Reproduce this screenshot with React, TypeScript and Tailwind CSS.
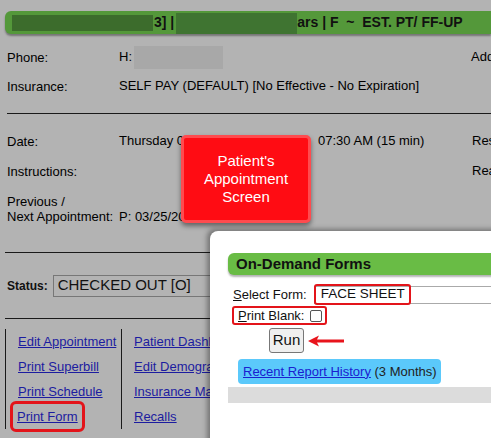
import React from "react";

const font = { fontFamily: '"Liberation Sans", Arial, sans-serif' };

function Row({ label, children, h, extra }: { label: React.ReactNode; children?: React.ReactNode; h: string; extra?: React.ReactNode }) {
  return (
    <div className={`flex items-center ${h} pl-[7px] text-[13px] text-[#000]`}>
      <div className="w-[112px] shrink-0 leading-[15px]">{label}</div>
      <div className="flex-1 whitespace-nowrap">{children}</div>
      {extra}
    </div>
  );
}

export default function App() {
  return (
    <div className="relative h-[438px] w-[491px] overflow-hidden bg-[#b3b3b3]" style={font}>
      {/* Header bar */}
      <div className="ml-[5px] mt-[11px] flex h-[23px] items-center whitespace-nowrap rounded-l-[6px] bg-[#54983a] text-[14px] font-bold text-[#111] shadow-[0_2px_2px_rgba(0,0,0,0.35)]">
        <div className="ml-[7px] h-[16px] w-[141px] bg-[#3c6c2c]" />
        <span className="ml-[1px]">3] |</span>
        <div className="ml-[2px] h-[21px] w-[121px] self-end bg-[#3f7431]" />
        <span>ars | F&nbsp; ~&nbsp; EST. PT/ FF-UP</span>
      </div>

      <div className="mt-[9px]">
        <Row h="h-[28px]" label="Phone:" extra={<span className="absolute left-[471px]">Add</span>}>
          <div className="flex items-center">
            <span>H:</span>
            <div className="ml-[2px] h-[23px] w-[89px] bg-[#a8a8a8]" />
          </div>
        </Row>
        <Row h="h-[30px]" label="Insurance:">
          SELF PAY (DEFAULT) [No Effective - No Expiration]
        </Row>
      </div>

      <div className="ml-[7px] mt-[12px] h-px bg-[#1a1a1a]" />

      <div className="mt-[12px]">
        <Row h="h-[30px]" label="Date:" extra={<span className="absolute left-[472px]">Res</span>}>
          <span>Thursday 0</span>
          <span className="ml-[134px]">07:30 AM (15 min)</span>
        </Row>
        <Row h="h-[30px]" label="Instructions:" extra={<span className="absolute left-[472px]">Rea</span>} />
        <div className="flex h-[38px] items-end pl-[7px] text-[13px] text-[#000]">
          <div className="w-[112px] shrink-0 leading-[15px]">
            Previous /<br />Next Appointment:
          </div>
          <div className="leading-[15px]">P: 03/25/20</div>
        </div>
      </div>

      <div className="ml-[5px] mt-[28px] h-px bg-[#1a1a1a]" />

      <div className="flex h-[65px] items-center pl-[7px]">
        <span className="text-[12px] font-bold text-[#111]">Status:</span>
        <div className="ml-[5px] flex h-[22px] w-[160px] items-center border border-[#777] pl-[4px] text-[15px] text-[#111]">
          CHECKED OUT [O]
        </div>
      </div>

      <div className="ml-[5px] h-px bg-[#1a1a1a]" />

      {/* Links */}
      <div className="ml-[5px] mt-[10px] flex text-[13px]">
        <div className="flex h-[100px] w-[116px] flex-col border-l border-[#1a1a1a]">
          {["Edit Appointment", "Print Superbill", "Print Schedule", "Print Form"].map((t) => (
            <div key={t} className="flex h-[25px] items-center pl-[12px]">
              <span
                className={`text-[#1c1ca0] underline ${t === "Print Form" ? "-ml-[6px] rounded-[4px] px-[5px] py-[4px] outline outline-[3px] -outline-offset-1 outline-[#e3141a]" : ""}`}
              >
                {t}
              </span>
            </div>
          ))}
        </div>
        <div className="flex h-[100px] flex-col border-l border-[#1a1a1a] pl-[12px]">
          {["Patient Dashboard", "Edit Demographics", "Insurance Manager", "Recalls"].map((t) => (
            <div key={t} className="flex h-[25px] items-center whitespace-nowrap">
              <span className="text-[#1c1ca0] underline">{t}</span>
            </div>
          ))}
        </div>
      </div>

      {/* Red callout */}
      <div className="absolute left-[181px] top-[135px] flex h-[88px] w-[130px] items-center justify-center rounded-[5px] border-[3px] border-[#ff4b4f] bg-[#ff0c13] text-center text-[15px] leading-[18px] text-white shadow-[0_3px_5px_rgba(0,0,0,0.45)]">
        Patient's
        <br />
        Appointment
        <br />
        Screen
      </div>

      {/* Popup */}
      <div className="absolute left-[210px] top-[231px] h-[220px] w-[300px] rounded-tl-[8px] bg-white pl-[18px] pt-[22px] shadow-[-3px_-2px_5px_rgba(0,0,0,0.35)]">
        <div className="flex h-[22px] items-center rounded-l-[6px] bg-[#69bc45] pl-[8px] text-[15px] font-bold text-[#111] shadow-[0_2px_2px_rgba(0,0,0,0.3)]">
          On-Demand Forms
        </div>
        <div className="mt-[11px] flex h-[17px] items-center pl-[5px] text-[13px] text-[#111]">
          <span>
            <span className="underline">S</span>elect Form:
          </span>
          <div className="relative ml-[7px] flex h-[18px] flex-1 items-center border border-[#aaa]">
            <span className="ml-[-1px] flex h-[21px] items-center rounded-[3px] border-[2px] border-[#e3141a] pl-[5px] pr-[4px] text-[13.5px]">
              FACE SHEET
            </span>
          </div>
        </div>
        <div className="mt-[3px] flex pl-[4px]">
          <div className="flex h-[19px] items-center gap-[6px] rounded-[3px] border-[2px] border-[#e3141a] pl-[4px] pr-[3px] text-[13px] text-[#111]">
            <span>
              <span className="underline">P</span>rint Blank:
            </span>
            <span className="h-[12px] w-[12px] rounded-[2px] border border-[#555]" />
          </div>
        </div>
        <div className="mt-[3px] flex items-center pl-[41px]">
          <div className="flex h-[25px] w-[35px] items-center justify-center rounded-[3px] border border-[#777] bg-[#efefef] text-[15px] text-[#111]">
            Run
          </div>
          <svg width="40" height="14" viewBox="0 0 40 14" className="ml-[2px]">
            <path d="M2 7 L13 1.5 L11 5.5 L38 5.5 L38 8.5 L11 8.5 L13 12.5 Z" fill="#e8141c" strokeLinejoin="round" />
          </svg>
        </div>
        <div className="ml-[10px] mt-[6px] flex h-[25px] w-[203px] items-center whitespace-nowrap rounded-[4px] bg-[#5bc9fb] pl-[5px] text-[13px] text-[#222]">
          <span className="text-[#1a20d0] underline">Recent Report History</span>&nbsp;(3 Months)
        </div>
        <div className="mt-[3px] h-[16px] bg-[#dcdcdc]" />
      </div>
    </div>
  );
}
